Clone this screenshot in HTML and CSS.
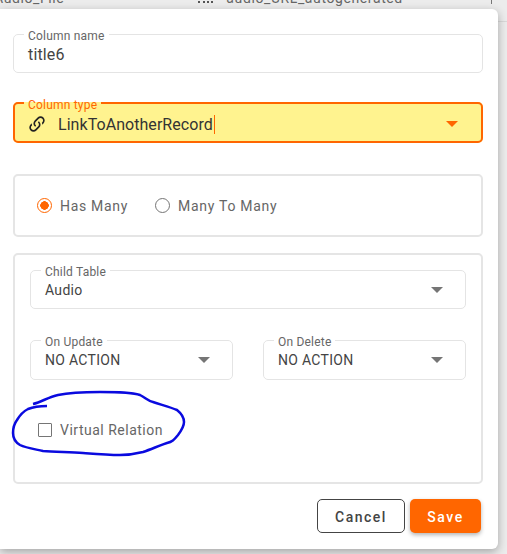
FILE: index.html
```html
<!DOCTYPE html>
<html lang="en">
<head>
  <meta charset="UTF-8" />
  <meta name="viewport" content="width=device-width, initial-scale=1.0"/>
  <title>Edit column</title>
  <link rel="stylesheet" href="styles.css">
</head>
<body>

  <div class="table-head">
    <span class="head-title">Audio_File</span>
    <span class="head-icon"></span>
    <span class="head-title head-second">audio_URL_autogenerated</span>
    <span class="head-divider"></span>
  </div>

  <div class="dialog">
    <fieldset class="field">
      <legend>Column name</legend>
      <div class="value">title6</div>
    </fieldset>

    <fieldset class="field field-active">
      <legend>Column type</legend>
      <div class="value type-value">
        <svg class="link-icon" viewBox="0 0 24 24"><path d="M10.59,13.41C11,13.8 11,14.44 10.59,14.83C10.2,15.22 9.56,15.22 9.17,14.83C7.22,12.88 7.22,9.71 9.17,7.76V7.76L12.71,4.22C14.66,2.27 17.83,2.27 19.78,4.22C21.73,6.17 21.73,9.34 19.78,11.29L18.29,12.78C18.3,11.96 18.17,11.14 17.89,10.36L18.36,9.88C19.54,8.71 19.54,6.81 18.36,5.64C17.19,4.46 15.29,4.46 14.12,5.64L10.59,9.17C9.41,10.34 9.41,12.24 10.59,13.41M13.41,9.17C13.8,8.78 14.44,8.78 14.83,9.17C16.78,11.12 16.78,14.29 14.83,16.24V16.24L11.29,19.78C9.34,21.73 6.17,21.73 4.22,19.78C2.27,17.83 2.27,14.66 4.22,12.71L5.71,11.22C5.7,12.04 5.83,12.86 6.11,13.65L5.64,14.12C4.46,15.29 4.46,17.19 5.64,18.36C6.81,19.54 8.71,19.54 9.88,18.36L13.41,14.83C14.59,13.66 14.59,11.76 13.41,10.59C13,10.2 13,9.56 13.41,9.17Z"/></svg>
        <span class="type-text">LinkToAnotherRecord</span>
        <span class="arrow arrow-orange"></span>
      </div>
    </fieldset>

    <div class="box radio-box">
      <div class="option">
        <span class="radio radio-on"></span>
        <span>Has Many</span>
      </div>
      <div class="option">
        <span class="radio"></span>
        <span>Many To Many</span>
      </div>
    </div>

    <div class="box relation-box">
      <fieldset class="field small">
        <legend>Child Table</legend>
        <div class="value select-value">Audio <span class="arrow"></span></div>
      </fieldset>

      <div class="select-row">
        <fieldset class="field small">
          <legend>On Update</legend>
          <div class="value select-value">NO ACTION <span class="arrow"></span></div>
        </fieldset>
        <fieldset class="field small">
          <legend>On Delete</legend>
          <div class="value select-value">NO ACTION <span class="arrow"></span></div>
        </fieldset>
      </div>

      <div class="option virtual">
        <span class="check"></span>
        <span>Virtual Relation</span>
      </div>
    </div>

    <div class="actions">
      <button class="btn btn-cancel">Cancel</button>
      <button class="btn btn-save">Save</button>
    </div>

    <!-- hand drawn circle around the checkbox -->
    <svg class="scribble" viewBox="0 0 190 70">
      <path d="M33 14 C42 12 48 7 58 5 C72 2 86 2 100 2 C118 2 132 2 140 5 C146 8 148 11 153 12 C162 15 170 17 177 20 C182 24 184 28 184 32 C184 37 181 41 178 45 C174 50 172 52 167 53 C158 56 152 59 143 62 C135 64 128 65 120 65 C108 65 96 64 83 63 C70 62 55 62 43 61 C34 59 26 58 20 55 C15 52 13 48 13 43 C13 38 14 34 17 30 C20 25 24 21 28 19 C33 17 40 16 47 16" />
    </svg>
  </div>

</body>
</html>
```

FILE: styles.css
```css
* {
  box-sizing: border-box;
}

body {
  margin: 0;
  height: 554px;
  overflow: hidden;
  background: linear-gradient(#ececec 21px, #d9d9d9 21px, #d9d9d9 22px, #ececec 22px);
  font-family: Roboto, sans-serif;
  color: #444;
}

.table-head {
  display: flex;
  height: 9px;
  overflow: hidden;
  font-size: 14px;
  line-height: 9px;
  color: #666;
}

.head-title {
  margin-top: -6px;
  margin-left: -6px;
  letter-spacing: 0.6px;
}

.head-icon {
  width: 15px;
  height: 3px;
  margin-left: 134px;
  border-bottom: 2px dotted #555;
}

.head-second {
  margin-left: 13px;
}

.head-divider {
  width: 1px;
  height: 4px;
  margin-left: 88px;
  background: #777;
}

.dialog {
  position: relative;
  width: 498px;
  height: 540px;
  padding: 16px 15px 0 13px;
  background: white;
  border-radius: 0 6px 6px 0;
  box-shadow: 0 3px 10px rgba(0, 0, 0, 0.3);
}

.field {
  margin: 0;
  padding: 0 10px;
  min-width: 0;
  height: 48px;
  border: 1px solid #e4e4e4;
  border-radius: 5px;
}

.field legend {
  padding: 4px 4px 0;
  margin-bottom: -2px;
  font-size: 12px;
  line-height: 14px;
  letter-spacing: 0.2px;
  color: #666;
}

.value {
  display: flex;
  align-items: center;
  height: 26px;
  padding: 0 4px;
  font-size: 16px;
  letter-spacing: 0.15px;
  color: #444;
}

.field-active {
  margin-top: 21px;
  height: 49px;
  border: 2px solid #ff6600;
  background: #fff38f;
}

.field-active legend {
  margin-left: -1px;
  margin-bottom: -1px;
  color: #ff6600;
}

.type-value {
  color: #333;
  letter-spacing: 0.05px;
}

.link-icon {
  width: 20px;
  height: 20px;
  margin-left: -2px;
  fill: #222;
}

.type-text {
  margin-left: 11px;
  padding-right: 1px;
  border-right: 1px solid #ff6600;
}

.arrow {
  width: 0;
  height: 0;
  margin-left: auto;
  margin-right: 12px;
  border-left: 6.5px solid transparent;
  border-right: 6.5px solid transparent;
  border-top: 6.5px solid #757575;
}

.arrow-orange {
  border-top-color: #ff6600;
  margin-right: 9px;
}

.box {
  border: 2px solid #e5e5e5;
  border-radius: 5px;
}

.radio-box {
  display: flex;
  align-items: center;
  gap: 27px;
  margin-top: 31px;
  height: 63px;
  padding: 0 22px;
}

.option {
  display: flex;
  align-items: center;
  gap: 8px;
  font-size: 14px;
  letter-spacing: 0.7px;
  color: #666;
}

.radio {
  width: 15px;
  height: 15px;
  border: 1.5px solid #757575;
  border-radius: 50%;
}

.radio-on {
  border-color: #ff6600;
  background: radial-gradient(circle, #ff6600 0 4px, white 4.5px);
}

.relation-box {
  margin-top: 16px;
  height: 231px;
  padding: 6px 15px 0;
}

.small .value {
  font-size: 14px;
  letter-spacing: 0.3px;
}

.select-row {
  display: grid;
  grid-template-columns: 203px 203px;
  gap: 30px;
  margin-top: 22px;
}

.select-row .field {
  height: 49px;
}

.select-value .arrow {
  margin-right: 8px;
}

.virtual {
  margin-top: 42px;
  margin-left: 8px;
  letter-spacing: 0.5px;
}

.check {
  width: 14px;
  height: 14px;
  border: 1.5px solid #757575;
  border-radius: 1px;
}

.actions {
  display: flex;
  justify-content: flex-end;
  gap: 5px;
  margin-top: 15px;
  padding-right: 2px;
}

.btn {
  height: 34px;
  padding: 1px 0 0;
  border-radius: 5px;
  font-family: Roboto, sans-serif;
  font-size: 14px;
  font-weight: 500;
  letter-spacing: 1.5px;
}

.btn-cancel {
  width: 88px;
  border: 1px solid #444;
  background: white;
  color: #444;
}

.btn-save {
  width: 71px;
  border: none;
  background: #ff6600;
  color: white;
  box-shadow: 0 2px 4px rgba(0, 0, 0, 0.3);
}

.scribble {
  position: absolute;
  left: 0;
  top: 381px;
  width: 190px;
  height: 70px;
  fill: none;
  stroke: #0a0adf;
  stroke-width: 2.5;
}
```
